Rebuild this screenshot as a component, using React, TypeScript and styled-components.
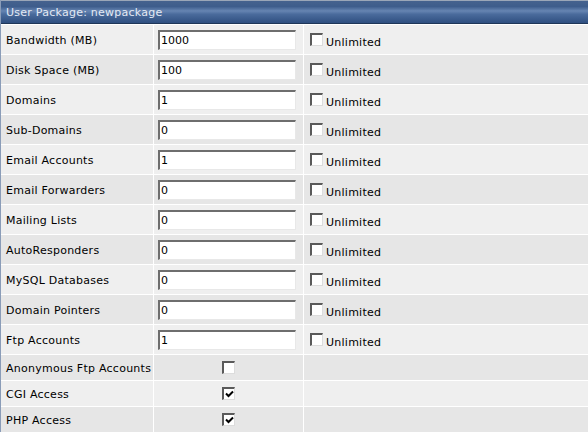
import styled, { createGlobalStyle } from 'styled-components';

type Row = {
  label: string;
  value?: string;
  checked?: boolean;
};

const limits: Row[] = [
  { label: 'Bandwidth (MB)', value: '1000' },
  { label: 'Disk Space (MB)', value: '100' },
  { label: 'Domains', value: '1' },
  { label: 'Sub-Domains', value: '0' },
  { label: 'Email Accounts', value: '1' },
  { label: 'Email Forwarders', value: '0' },
  { label: 'Mailing Lists', value: '0' },
  { label: 'AutoResponders', value: '0' },
  { label: 'MySQL Databases', value: '0' },
  { label: 'Domain Pointers', value: '0' },
  { label: 'Ftp Accounts', value: '1' },
];

const toggles: Row[] = [
  { label: 'Anonymous Ftp Accounts', checked: false },
  { label: 'CGI Access', checked: true },
  { label: 'PHP Access', checked: true },
];

const GlobalStyle = createGlobalStyle`
  body {
    margin: 0;
    background: #ffffff;
    font-family: "DejaVu Sans", Verdana, sans-serif;
  }
`;

const Panel = styled.div`
  width: 587px;
  border-left: 1px solid #8a9cb8;
  background: #ffffff;
`;

const Header = styled.div`
  height: 24px;
  box-sizing: border-box;
  padding: 0 5px;
  display: flex;
  align-items: center;
  color: #e4eaf4;
  font-size: 11px;
  letter-spacing: 0.25px;
  border-top: 1px solid #9aa6b8;
  border-bottom: 1px solid #1f3658;
  background: linear-gradient(
    #45628e 0%,
    #3e5d8c 25%,
    #6685b2 45%,
    #4a6b9c 60%,
    #2f4f80 100%
  );
`;

const Grid = styled.div`
  display: grid;
  grid-template-columns: 152px 149px 1fr;
  column-gap: 1px;
  row-gap: 1px;
  padding-top: 1px;
`;

const Cell = styled.div<{ $shade: boolean; $tall: boolean }>`
  height: ${({ $tall }) => ($tall ? '29px' : '25px')};
  background: ${({ $shade }) => ($shade ? '#e6e6e6' : '#efefef')};
  display: flex;
  align-items: center;
  font-size: 11px;
  letter-spacing: 0.25px;
  color: #000;
`;

const LabelCell = styled(Cell)`
  padding-left: 5px;
  padding-top: 2px;
  box-sizing: border-box;
  white-space: nowrap;
`;

const FieldCell = styled(Cell)<{ $center?: boolean }>`
  padding-left: ${({ $center }) => ($center ? '0' : '4px')};
  justify-content: ${({ $center }) => ($center ? 'center' : 'flex-start')};
`;

const OptionCell = styled(Cell)`
  padding-left: 6px;
`;

const TextInput = styled.input`
  width: 138px;
  height: 20px;
  box-sizing: border-box;
  margin: 0;
  padding: 1px 1px 0;
  font-family: "DejaVu Sans", Verdana, sans-serif;
  font-size: 11px;
  color: #000;
  background: #fff;
  border-style: solid;
  border-width: 2px 1px 1px 2px;
  border-color: #6e6e6e #e8e8e8 #e8e8e8 #6e6e6e;
  outline: none;
`;

const Box = styled.span`
  width: 13px;
  height: 13px;
  box-sizing: border-box;
  display: inline-flex;
  align-items: center;
  justify-content: center;
  background: #fff;
  border-style: solid;
  border-width: 2px 1px 1px 2px;
  border-color: #5a5a5a #dcdcdc #dcdcdc #5a5a5a;
`;

const Unlimited = styled.label`
  display: flex;
  align-items: flex-end;
  gap: 3px;
  font-size: 11px;

  span:last-child {
    position: relative;
    top: 3px;
  }
`;

function Checkbox({ checked }: { checked?: boolean }) {
  return (
    <Box>
      {checked && (
        <svg width="9" height="9" viewBox="0 0 9 9">
          <path d="M1 3.5 L3.5 6 L8 1.5" stroke="#000" strokeWidth="2" fill="none" />
        </svg>
      )}
    </Box>
  );
}

export default function App() {
  return (
    <>
      <GlobalStyle />
      <Panel>
        <Header>User Package: newpackage</Header>
        <Grid>
          {limits.map((row, i) => (
            <>
              <LabelCell key={row.label} $shade={i % 2 === 1} $tall>
                {row.label}
              </LabelCell>
              <FieldCell $shade={i % 2 === 1} $tall>
                <TextInput defaultValue={row.value} />
              </FieldCell>
              <OptionCell $shade={i % 2 === 1} $tall>
                <Unlimited>
                  <Checkbox />
                  <span>Unlimited</span>
                </Unlimited>
              </OptionCell>
            </>
          ))}
          {toggles.map((row, i) => (
            <>
              <LabelCell key={row.label} $shade={(i + limits.length) % 2 === 1} $tall={false}>
                {row.label}
              </LabelCell>
              <FieldCell $shade={(i + limits.length) % 2 === 1} $tall={false} $center>
                <Checkbox checked={row.checked} />
              </FieldCell>
              <OptionCell $shade={(i + limits.length) % 2 === 1} $tall={false} />
            </>
          ))}
        </Grid>
      </Panel>
    </>
  );
}
